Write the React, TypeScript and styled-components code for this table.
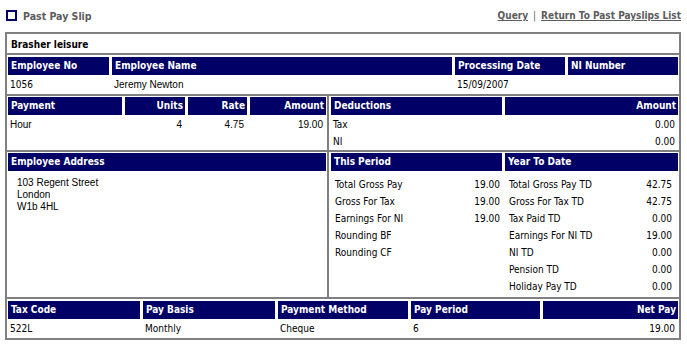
import styled, { createGlobalStyle } from "styled-components";

const navy = "#000066";
const rule = "#808080";
const tahoma = `"DejaVu Sans Condensed", "DejaVu Sans", sans-serif`;
const arial = `"Liberation Sans", Arial, sans-serif`;

const GlobalStyle = createGlobalStyle`
  body {
    margin: 0;
    background: #fff;
    font-family: ${tahoma};
    font-size: 10px;
    color: #000;
  }
`;

const thisPeriod = [
  ["Total Gross Pay", "19.00"],
  ["Gross For Tax", "19.00"],
  ["Earnings For NI", "19.00"],
  ["Rounding BF", ""],
  ["Rounding CF", ""],
];

const yearToDate = [
  ["Total Gross Pay TD", "42.75"],
  ["Gross For Tax TD", "42.75"],
  ["Tax Paid TD", "0.00"],
  ["Earnings For NI TD", "19.00"],
  ["NI TD", "0.00"],
  ["Pension TD", "0.00"],
  ["Holiday Pay TD", "0.00"],
];

export default function App() {
  return (
    <Page>
      <GlobalStyle />
      <TopBar>
        <Title>
          <Box />
          Past Pay Slip
        </Title>
        <Links>
          <NavLink href="#">Query</NavLink>
          <Pipe>|</Pipe>
          <NavLink href="#">Return To Past Payslips List</NavLink>
        </Links>
      </TopBar>

      <Slip>
        <Company>Brasher leisure</Company>

        <Section>
          <Grid cols="101px 340px 110px 1fr">
            <Head>Employee No</Head>
            <Head>Employee Name</Head>
            <Head>Processing Date</Head>
            <Head>NI Number</Head>
          </Grid>
          <Grid cols="101px 340px 110px 1fr">
            <Cell>1056</Cell>
            <Cell plain>Jeremy Newton</Cell>
            <Cell>15/09/2007</Cell>
            <Cell></Cell>
          </Grid>
        </Section>

        <Split>
          <Panel>
            <Grid cols="114px 60px 59px 1fr">
              <Head>Payment</Head>
              <Head right>Units</Head>
              <Head right>Rate</Head>
              <Head right>Amount</Head>
            </Grid>
            <Rows>
              <Grid cols="114px 60px 59px 1fr">
                <Cell plain>Hour</Cell>
                <Cell plain right>4</Cell>
                <Cell plain right>4.75</Cell>
                <Cell plain right>19.00</Cell>
              </Grid>
            </Rows>
          </Panel>
          <Panel divided>
            <Grid cols="171px 1fr">
              <Head>Deductions</Head>
              <Head right>Amount</Head>
            </Grid>
            <Rows>
              <Grid cols="171px 1fr">
                <Cell>Tax</Cell>
                <Cell right>0.00</Cell>
                <Cell>NI</Cell>
                <Cell right>0.00</Cell>
              </Grid>
            </Rows>
          </Panel>
        </Split>

        <Split>
          <Panel>
            <Head>Employee Address</Head>
            <Address>
              103 Regent Street
              <br />
              London
              <br />
              W1b 4HL
            </Address>
          </Panel>
          <Panel divided>
            <Grid cols="171px 1fr">
              <Head>This Period</Head>
              <Head>Year To Date</Head>
            </Grid>
            <Totals>
              <TotalsList>
                {thisPeriod.map(([label, value]) => (
                  <TotalRow key={label}>
                    <span>{label}</span>
                    <span>{value}</span>
                  </TotalRow>
                ))}
              </TotalsList>
              <TotalsList>
                {yearToDate.map(([label, value]) => (
                  <TotalRow key={label} ytd>
                    <span>{label}</span>
                    <span>{value}</span>
                  </TotalRow>
                ))}
              </TotalsList>
            </Totals>
          </Panel>
        </Split>

        <Section>
          <Grid cols="132px 132px 130px 129px 1fr">
            <Head>Tax Code</Head>
            <Head>Pay Basis</Head>
            <Head>Payment Method</Head>
            <Head>Pay Period</Head>
            <Head right>Net Pay</Head>
          </Grid>
          <Grid cols="132px 132px 130px 129px 1fr">
            <Cell>522L</Cell>
            <Cell>Monthly</Cell>
            <Cell>Cheque</Cell>
            <Cell>6</Cell>
            <Cell right>19.00</Cell>
          </Grid>
        </Section>
      </Slip>
    </Page>
  );
}

const Page = styled.div`
  width: 687px;
  padding: 9px 6px 0 5px;
  box-sizing: border-box;
`;

const TopBar = styled.div`
  display: flex;
  align-items: center;
  justify-content: space-between;
  height: 13px;
  margin-bottom: 10px;
`;

const Title = styled.div`
  display: flex;
  align-items: center;
  gap: 6px;
  padding-left: 1px;
  font-weight: bold;
  font-size: 10.5px;
  color: #5c5c5c;
`;

const Box = styled.span`
  width: 7px;
  height: 7px;
  border: 2px solid ${navy};
`;

const Links = styled.div`
  display: flex;
  align-items: center;
  gap: 5px;
  font-weight: bold;
  font-size: 10px;
  color: #5c5c5c;
`;

const NavLink = styled.a`
  color: #5c5c5c;
  text-decoration: underline;
`;

const Pipe = styled.span`
  font-weight: normal;
`;

const Slip = styled.div`
  width: 676px;
  box-sizing: border-box;
  border: 2px solid ${rule};
`;

const Company = styled.div`
  height: 19px;
  line-height: 21px;
  padding-left: 4px;
  font-weight: bold;
`;

const Section = styled.div`
  border-top: 2px solid ${rule};
  padding: 2px 1px 1px;
  display: flex;
  flex-direction: column;
  gap: 1px;
`;

const Split = styled.div`
  border-top: 2px solid ${rule};
  display: grid;
  grid-template-columns: 320px 1fr;
`;

const Panel = styled.div<{ divided?: boolean }>`
  padding: 1px 1px 0 ${(p) => (p.divided ? "2px" : "1px")};
  border-left: ${(p) => (p.divided ? `2px solid ${rule}` : "none")};
`;

const Grid = styled.div<{ cols: string }>`
  display: grid;
  grid-template-columns: ${(p) => p.cols};
  column-gap: 3px;
`;

const Head = styled.div<{ right?: boolean }>`
  height: 18px;
  line-height: 18px;
  padding: 0 2px 0 3px;
  background: ${navy};
  color: #fff;
  font-weight: bold;
  white-space: nowrap;
  overflow: hidden;
  text-align: ${(p) => (p.right ? "right" : "left")};
`;

const Cell = styled.div<{ right?: boolean; plain?: boolean }>`
  height: 17px;
  line-height: 18px;
  padding: 0 3px 0 2px;
  white-space: nowrap;
  text-align: ${(p) => (p.right ? "right" : "left")};
  font-family: ${(p) => (p.plain ? arial : tahoma)};
  font-size: 10px;
`;

const Rows = styled.div`
  padding-top: 1px;
`;

const Address = styled.div`
  padding: 6px 9px;
  font-family: ${arial};
  font-size: 10px;
  line-height: 12px;
`;

const Totals = styled.div`
  display: grid;
  grid-template-columns: 174px 1fr;
  padding: 5px 0 2px;
`;

const TotalsList = styled.div`
  display: flex;
  flex-direction: column;
`;

const TotalRow = styled.div<{ ytd?: boolean }>`
  display: flex;
  justify-content: space-between;
  height: 17px;
  line-height: 17px;
  padding: ${(p) => (p.ytd ? "0 6px 0 4px" : "0 5px 0 4px")};
  white-space: nowrap;
`;
